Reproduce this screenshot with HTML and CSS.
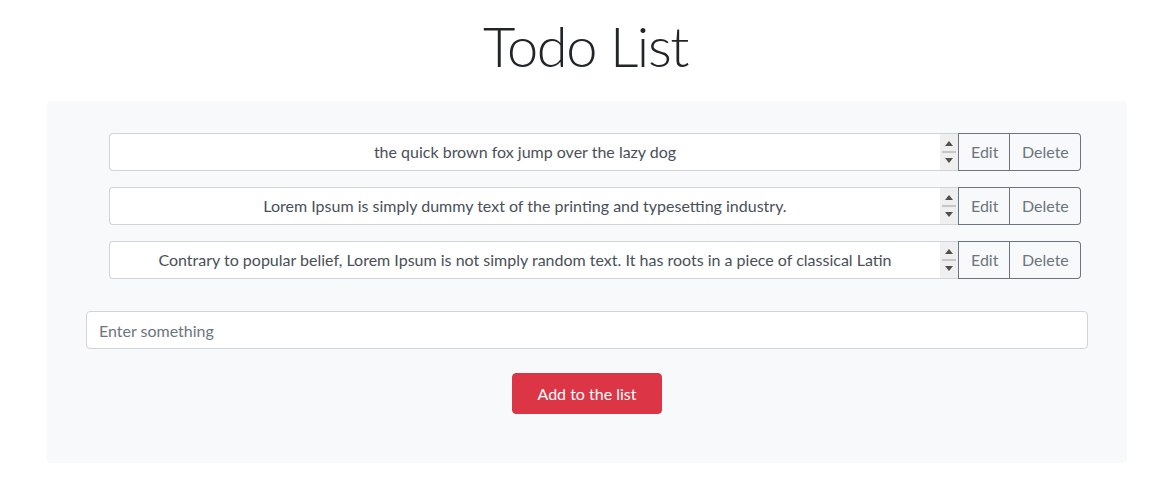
FILE: index.html
```html
<!DOCTYPE html>
<html>
<head>
<meta charset="utf-8">
<link rel="stylesheet" href="styles.css">
</head>
<body>
<h1 class="title">Todo List</h1>
<div class="panel">
  <div class="list">
    <div class="row">
      <div class="field"><span class="text">the quick brown fox jump over the lazy dog</span><span class="spin"><i class="up"></i><i class="mid"></i><i class="down"></i></span></div>
      <button class="btn-out">Edit</button><button class="btn-out last">Delete</button>
    </div>
    <div class="row">
      <div class="field"><span class="text">Lorem Ipsum is simply dummy text of the printing and typesetting industry.</span><span class="spin"><i class="up"></i><i class="mid"></i><i class="down"></i></span></div>
      <button class="btn-out">Edit</button><button class="btn-out last">Delete</button>
    </div>
    <div class="row">
      <div class="field"><span class="text">Contrary to popular belief, Lorem Ipsum is not simply random text. It has roots in a piece of classical Latin</span><span class="spin"><i class="up"></i><i class="mid"></i><i class="down"></i></span></div>
      <button class="btn-out">Edit</button><button class="btn-out last">Delete</button>
    </div>
  </div>
  <input class="entry" type="text" placeholder="Enter something">
  <div class="actions"><button class="btn-add">Add to the list</button></div>
</div>
</body>
</html>
```
FILE: styles.css
```css
* { box-sizing: border-box; }
body {
  margin: 0;
  font-family: Lato, "Liberation Sans", sans-serif;
  color: #212529;
  background: #fff;
}
.title {
  margin: 13px 0 22px;
  padding-left: 4px;
  text-align: center;
  font-weight: 300;
  font-size: 56px;
  letter-spacing: -1.4px;
  line-height: 66px;
  color: #212529;
}
.panel {
  margin-left: 47px;
  width: 1080px;
  background: #f8f9fa;
  border-radius: 4px;
  padding: 32px 0 49px;
}
.list {
  margin-left: 62px;
  width: 972px;
  display: flex;
  flex-direction: column;
  gap: 16px;
}
.row {
  display: flex;
  height: 38px;
}
.field {
  flex: 1;
  display: flex;
  align-items: stretch;
  background: #fff;
  border: 1px solid #ced4da;
  border-right: none;
  border-radius: 4px 0 0 4px;
}
.text {
  flex: 1;
  display: flex;
  align-items: center;
  justify-content: center;
  font-size: 16px;
  color: #495057;
  padding-bottom: 1px;
  white-space: nowrap;
}
.spin {
  width: 18px;
  background: #efefef;
  display: flex;
  flex-direction: column;
  align-items: center;
  justify-content: center;
  gap: 3px;
}
.up, .down {
  display: block;
  width: 0;
  height: 0;
  border-left: 4px solid transparent;
  border-right: 4px solid transparent;
}
.up { border-bottom: 5px solid #505050; }
.down { border-top: 5px solid #505050; }
.mid {
  display: block;
  width: 14px;
  height: 2px;
  background: #c6c6c6;
  margin: 2px 0;
}
.btn-out {
  font-family: inherit;
  font-size: 16px;
  color: #6c757d;
  background: transparent;
  border: 1px solid #6c757d;
  padding: 0 12px 1px;
  height: 38px;
  width: 52px;
  margin: 0;
}
.btn-out.last {
  width: 71px;
  border-left: none;
  border-radius: 0 4px 4px 0;
}
.entry {
  display: block;
  margin: 32px 0 0 39px;
  width: 1002px;
  height: 38px;
  border: 1px solid #ced4da;
  border-radius: 4px;
  background: #fff;
  padding: 0 12px;
  font-family: inherit;
  font-size: 16px;
  color: #495057;
}
.entry::placeholder { color: #6c757d; }
.actions {
  display: flex;
  justify-content: center;
  margin-top: 24px;
}
.btn-add {
  width: 150px;
  height: 41px;
  background: #dc3545;
  border: 1px solid #dc3545;
  border-radius: 4px;
  color: #fff;
  font-family: inherit;
  font-size: 16px;
  margin: 0;
}
```
